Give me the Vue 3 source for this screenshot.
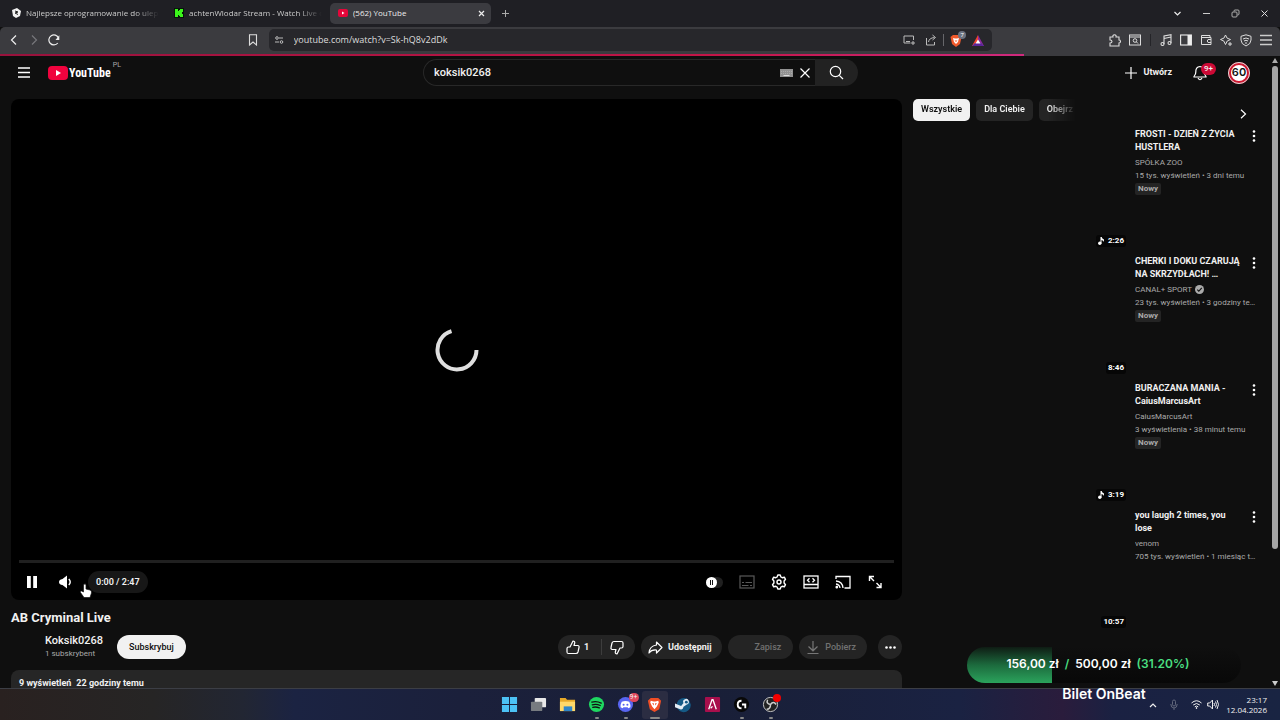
<script setup>
const tabs = [
  { id: 'soft', title: 'Najlepsze oprogramowanie do uleps', active: false },
  { id: 'kick', title: 'achtenWlodar Stream - Watch Live o', active: false },
  { id: 'yt', title: '(562) YouTube', active: true },
]

const videos = [
  { title: 'FROSTI - DZIEŃ Z ŻYCIA HUSTLERA', author: 'SPÓŁKA ZOO', meta: '15 tys. wyświetleń • 3 dni temu', isNew: true, time: '2:26', music: true },
  { title: 'CHERKI I DOKU CZARUJĄ NA SKRZYDŁACH! …', author: 'CANAL+ SPORT', verified: true, meta: '23 tys. wyświetleń • 3 godziny temu', isNew: true, time: '8:46' },
  { title: 'BURACZANA MANIA - CaiusMarcusArt', author: 'CaiusMarcusArt', meta: '3 wyświetlenia • 38 minut temu', isNew: true, time: '3:19', music: true },
  { title: 'you laugh 2 times, you lose', author: 'venom', meta: '705 tys. wyświetleń • 1 miesiąc temu', time: '10:57' },
]

const collected = 31.2
</script>

<template>
  <div class="desktop">
    <div class="tabbar">
      <div v-for="t in tabs" :key="t.id" class="tab" :class="{ active: t.active }">
        <svg v-if="t.id === 'soft'" class="fav" viewBox="0 0 10 10"><path d="M1 2l5-2 4 3-1 5-4 2-3-2z" fill="#f2f2f2" /><path d="M4 3l3 1-3 1 3 1.500" fill="none" stroke="#222" /></svg>
        <svg v-else-if="t.id === 'kick'" class="fav" viewBox="0 0 10 10"><rect width="10" height="10" fill="#07150a" /><path d="M1 1h3v2h1V2h1V1h3v3H8v2h1v3H6V8H5V7H4v2H1z" fill="#3bf51b" /></svg>
        <svg v-else class="fav" viewBox="0 0 10 10"><rect y="1" width="10" height="8" rx="2" fill="#e5063a" /><path d="M4 3.500v3L6.500 5z" fill="#fff" /></svg>
        <span class="tab-title">{{ t.title }}</span>
        <button v-if="t.active" class="ib tab-close" aria-label="Zamknij kartę"><svg width="7" height="7" viewBox="0 0 7 7"><path d="M1 1l5 5M6 1L1 6" stroke="#eee" stroke-width="1.200" /></svg></button>
      </div>
      <button class="ib new-tab" aria-label="Nowa karta"><svg width="9" height="9" viewBox="0 0 9 9"><path d="M4.500 1v7M1 4.500h7" stroke="#aaa" /></svg></button>
      <div class="window-buttons">
        <button class="ib" aria-label="Lista kart"><svg width="9" height="9" viewBox="0 0 9 9"><path d="M1.500 3l3 3 3-3" fill="none" stroke="#eee" stroke-width="1.200" /></svg></button>
        <button class="ib" aria-label="Minimalizuj"><svg width="9" height="9" viewBox="0 0 9 9"><path d="M1 4.500h7" stroke="#ccc" /></svg></button>
        <button class="ib" aria-label="Przywróć"><svg width="9" height="9" viewBox="0 0 9 9" fill="none" stroke="#bbb" stroke-width=".9"><rect x="1" y="3" width="5" height="5" rx="1" /><path d="M3 2.500V2q0-1 1-1h3q1 0 1 1v3q0 1-1.500 1" /></svg></button>
        <button class="ib" aria-label="Zamknij"><svg width="9" height="9" viewBox="0 0 9 9"><path d="M1.500 1.500l6 6M7.500 1.500l-6 6" stroke="#ddd" /></svg></button>
      </div>
    </div>

    <div class="toolbar">
      <div class="nav">
        <button class="ib" aria-label="Wstecz"><svg width="12" height="12" viewBox="0 0 12 12"><path d="M8 1.500L3.500 6 8 10.500" fill="none" stroke="#eee" stroke-width="1.200" /></svg></button>
        <button class="ib" aria-label="Dalej"><svg width="12" height="12" viewBox="0 0 12 12"><path d="M4 1.500L8.500 6 4 10.500" fill="none" stroke="#77777b" stroke-width="1.200" /></svg></button>
        <button class="ib" aria-label="Odśwież"><svg width="12" height="12" viewBox="0 0 12 12"><path d="M9.800 9A5 5 0 1 1 10.500 4" fill="none" stroke="#eee" stroke-width="1.200" /><path d="M11.300 1.200V6H7.500z" fill="#eee" /></svg></button>
        <button class="ib bookmark" aria-label="Zakładka"><svg width="10" height="12" viewBox="0 0 10 12"><path d="M1.500.7h7v10.300L5 8l-3.500 3z" fill="none" stroke="#ddd" stroke-width="1.100" /></svg></button>
      </div>
      <div class="urlbar">
        <svg width="9" height="8" viewBox="0 0 9 8" fill="none" stroke="#ccc" stroke-width=".9"><circle cx="2" cy="2" r="1.300" /><path d="M4 2h4M0 6h4" /><circle cx="6.500" cy="6" r="1.300" /></svg>
        <input class="url" aria-label="Adres" value="youtube.com/watch?v=Sk-hQ8v2dDk">
        <button class="ib" aria-label="Obraz w obrazie"><svg width="12" height="10" viewBox="0 0 12 10" fill="none" stroke="#bbb"><path d="M10.500 5V1H1v7h6.500M3 6.500h4M10 6v4M8 8h4" /></svg></button>
        <button class="ib" aria-label="Udostępnij stronę"><svg width="12" height="12" viewBox="0 0 12 12" fill="none" stroke="#bbb"><path d="M1.500 4v7h8V8M3.500 8q.5-4 6-4.500M7.500 1l3 2.500-3 2.500" /></svg></button>
        <span class="divider"></span>
        <button class="ib shield" aria-label="Brave Shields">
          <svg width="12" height="13" viewBox="0 0 12 13"><path d="M3 1h6l2.500 2L10 10l-4 3-4-3L.5 3z" fill="#f0592b" /><path d="M3 4l2 .5h2L9 4 8 8 6 10 4 8z" fill="#fff" /><path d="M4.500 6.500h3L6 8z" fill="#f0592b" /></svg>
          <span class="shield-count">7</span>
        </button>
        <button class="ib" aria-label="Brave Rewards"><svg width="12" height="11" viewBox="0 0 12 11"><path d="M6 0L0 11h6z" fill="#f1432f" /><path d="M6 0l6 11H6z" fill="#8b2a9c" /><path d="M0 11l3-3h6l3 3z" fill="#5a2598" /><path d="M6 4.500L3.500 8.500h5z" fill="#fff" /></svg></button>
      </div>
      <div class="extensions">
        <button class="ib" aria-label="Rozszerzenia"><svg width="13" height="13" viewBox="0 0 13 13"><path d="M2 3h3q-.5-2.200 1.500-2.200T8 3h3v3q1.500 0 1.500 1.500T11 9v3H2V9q2 0 2-1.500T2 6z" fill="none" stroke="#ddd" stroke-width="1.100" /></svg></button>
        <button class="ib" aria-label="Szukaj kart"><svg width="12" height="12" viewBox="0 0 12 12" fill="none" stroke="#ddd"><rect x=".5" y="1" width="11" height="10" /><path d="M.5 3h11M7.500 8l1.500 1.500" /><circle cx="6" cy="6.500" r="1.800" /></svg></button>
        <span class="divider dark"></span>
        <button class="ib" aria-label="Muzyka"><svg width="12" height="12" viewBox="0 0 12 12" fill="none" stroke="#ddd" stroke-width="1.100"><path d="M4 10V2l7-1.300V9M4 4.500L11 3" /><circle cx="2.500" cy="10" r="1.500" /><circle cx="9.500" cy="9" r="1.500" /></svg></button>
        <button class="ib" aria-label="Panel boczny"><svg width="12" height="12" viewBox="0 0 12 12"><rect x=".6" y="1" width="10.800" height="10" fill="none" stroke="#eee" stroke-width="1.100" /><path d="M7.500 1H11v10H7.500z" fill="#eee" /></svg></button>
        <button class="ib" aria-label="Portfel"><svg width="12" height="12" viewBox="0 0 12 12" fill="none" stroke="#ddd"><path d="M10 3.500V1.500H1.500v9h9.500V3.500H1.500M11 5.500H8q-1.500 1.500 0 3h3" /></svg></button>
        <button class="ib" aria-label="Leo AI"><svg width="12" height="12" viewBox="0 0 12 12" fill="none" stroke="#ddd"><path d="M5.500 1q.7 4 5 4.500-4 .5-5 5-.7-4.200-5-5 4.300-.5 5-4.500zM10 8v4M8 10h4" /></svg></button>
        <button class="ib" aria-label="VPN"><svg width="12" height="13" viewBox="0 0 12 13" fill="none" stroke="#ddd"><path d="M6 .8l5 1.500V6q0 4-5 6Q1 10 1 6V2.300zM3 5q3-2 6 0M4 7q2-1.500 4 0M6 8v2" /></svg></button>
        <button class="ib" aria-label="Menu przeglądarki"><svg width="12" height="12" viewBox="0 0 12 12"><path d="M0 1.500h12M0 6h12M0 10.500h12" stroke="#ccc" stroke-width="1.300" /></svg></button>
      </div>
    </div>
    <div class="loading"><div class="loading-fill"></div></div>

    <div class="viewport">
      <div class="page">
        <header class="masthead">
          <div class="brand">
            <button class="ib" aria-label="Menu"><svg width="12" height="11" viewBox="0 0 12 11"><path d="M0 1h12M0 5.500h12M0 10h12" stroke="#fff" stroke-width="1.300" /></svg></button>
            <a class="logo" href="#"><svg width="20" height="14" viewBox="0 0 20 14"><rect width="20" height="14" rx="4" fill="#f0033e" /><path d="M8 4v6l5-3z" fill="#fff" /></svg><span class="logo-text">YouTube</span><span class="country">PL</span></a>
          </div>
          <form class="search" @submit.prevent>
            <div class="search-box">
              <input aria-label="Szukaj" value="koksik0268">
              <svg width="13" height="8" viewBox="0 0 13 8"><rect width="13" height="8" fill="#929292" /><path d="M1 2.500h11M1 4.500h11" stroke="#aaa" stroke-dasharray="1 1" /><path d="M3.500 6.500h6" stroke="#ddd" /></svg>
              <button type="button" class="ib" aria-label="Wyczyść"><svg width="12" height="12" viewBox="0 0 12 12"><path d="M1.500 1.500l9 9M10.500 1.500l-9 9" stroke="#fff" stroke-width="1.200" /></svg></button>
            </div>
            <button class="search-go" aria-label="Wyszukaj"><svg width="15" height="15" viewBox="0 0 15 15" fill="none" stroke="#fff" stroke-width="1.200"><circle cx="6.500" cy="6.500" r="5.200" /><path d="M10.300 10.300l3.700 3.700" /></svg></button>
          </form>
          <div class="account">
            <button class="create"><svg width="12" height="12" viewBox="0 0 12 12"><path d="M6 0v12M0 6h12" stroke="#fff" stroke-width="1.200" /></svg>Utwórz</button>
            <button class="ib bell" aria-label="Powiadomienia"><svg width="14" height="16" viewBox="0 0 14 16"><path d="M7 1.500Q2.500 2 2.800 7 3 9 1 11.500V12h12v-.5Q11 9 11.200 7 11.500 2 7 1.500z" fill="none" stroke="#fff" stroke-width="1.200" /><path d="M5 13q2 3.500 4 0" fill="none" stroke="#fff" stroke-width="1.200" /></svg><span class="count">9+</span></button>
            <button class="avatar" aria-label="Konto">60</button>
          </div>
        </header>

        <div class="columns">
          <main class="primary">
            <section class="player">
              <div class="stage">
                <svg class="spinner" viewBox="0 0 44 44"><path d="M16.500 3.200A19.500 19.500 0 1 0 41.500 22" fill="none" stroke="#dfdfdf" stroke-width="4" /></svg>
              </div>
              <input class="seek" type="range" aria-label="Postęp" value="0">
              <div class="controls">
                <button class="ib" aria-label="Pauza"><svg width="10" height="12" viewBox="0 0 10 12"><path d="M0 0h3.800v12H0zM6.200 0H10v12H6.200z" fill="#fff" /></svg></button>
                <button class="ib c-vol" aria-label="Głośność"><svg width="13" height="14" viewBox="0 0 13 14"><path d="M8 .5v13L3.500 10Q0 9.500 0 7t3.500-3z" fill="#fff" /><path d="M9.800 4q2.800 3 0 6" fill="none" stroke="#fff" stroke-width="1.400" /></svg></button>
                <span class="clock">0:00 / 2:47</span>
                <svg class="pointer" viewBox="0 0 12 15"><path d="M4 1.200Q5.500.2 6 2v4l4 1q2 .7 1.500 3L10 14.500H4L.5 9.500q-.7-2 1-1.500L3.500 9V2z" fill="#fff" stroke="#111" stroke-width=".7" /></svg>
                <div class="right-controls">
                  <label class="autoplay"><input type="checkbox" aria-label="Autoodtwarzanie"><span class="knob"><i></i><i></i></span></label>
                  <button class="ib" aria-label="Napisy"><svg width="16" height="14" viewBox="0 0 16 14"><rect x="1" y="1" width="14" height="12" fill="none" stroke="#595959" stroke-width="1.200" /><path d="M3 7.500h2M6.500 7.500H13M3 10.500h6.500M11 10.500h2" stroke="#595959" /></svg></button>
                  <button class="ib" aria-label="Ustawienia"><svg width="16" height="16" viewBox="0 0 16 16" fill="none" stroke="#fff" stroke-width="1.400"><path d="M6.800 1h2.400l.7 2 1.300.7 2.100-.5 1.200 2.100L13.100 7v2l1.400 1.700-1.200 2.100-2.100-.5-1.300.7-.7 2H6.800l-.7-2-1.300-.7-2.100.5-1.200-2.100L2.900 9V7L1.500 5.300l1.200-2.100 2.100.5L6.100 3z" stroke-linejoin="round" /><circle cx="8" cy="8" r="2" /></svg></button>
                  <button class="ib" aria-label="Tryb kinowy"><svg width="16" height="14" viewBox="0 0 16 14" fill="none" stroke="#fff" stroke-width="1.300"><rect x="1" y="1" width="14" height="12" /><path d="M1 9.500h14M6.500 3.200L4.500 5.200l2 2M9.500 3.200l2 2-2 2" /></svg></button>
                  <button class="ib" aria-label="Przesyłaj"><svg width="16" height="14" viewBox="0 0 16 14" fill="none" stroke="#fff" stroke-width="1.300"><path d="M1 4V1.500h14V13H9.500M1 6q6.500.5 7 7M1 9q3.500.5 4 4" /><circle cx="1.800" cy="12.200" r=".7" fill="#fff" /></svg></button>
                  <button class="ib" aria-label="Pełny ekran"><svg width="16" height="14" viewBox="0 0 16 14" fill="none" stroke="#fff" stroke-width="1.400"><path d="M7 6L2.500 1.500M2.500 6V1.500H7M9.500 8l4.500 4.500M14 8v4.500H9.500" /></svg></button>
                </div>
              </div>
            </section>

            <h1>AB Cryminal Live</h1>
            <div class="meta-row">
              <div class="owner"><a class="channel" href="#">Koksik0268</a><span class="subs">1 subskrybent</span></div>
              <button class="subscribe">Subskrybuj</button>
              <div class="actions">
                <div class="votes">
                  <button class="vote"><svg width="14" height="15" viewBox="0 0 14 15" fill="none" stroke="#fff" stroke-width="1.200" stroke-linejoin="round"><path d="M4 7L7 1q2 .2 1.700 2L8 5.500h4q1.500.5 1 2L12 12q-.5 1.500-2 1.500H2.500Q1 13.500 1 12V8.500Q1 7 2.500 7z" /></svg>1</button>
                  <button class="vote down" aria-label="Nie podoba mi się"><svg width="14" height="15" viewBox="0 0 14 15" fill="none" stroke="#fff" stroke-width="1.200" stroke-linejoin="round"><path d="M10 8L7 14q-2-.2-1.700-2L6 9.500H2q-1.500-.5-1-2L2 3q.5-1.500 2-1.500h7.500Q13 1.500 13 3v3.500Q13 8 11.500 8z" /></svg></button>
                </div>
                <button class="pill"><svg width="15" height="13" viewBox="0 0 15 13"><path d="M8.500 1l5.500 5.500L8.500 12V9Q3.500 8.500 1 12q.5-7 7.500-8z" fill="none" stroke="#fff" stroke-width="1.200" stroke-linejoin="round" /></svg>Udostępnij</button>
                <button class="pill save" disabled>Zapisz</button>
                <button class="pill download" disabled><svg width="12" height="13" viewBox="0 0 12 13"><path d="M6 0v9.500M1.500 5.500L6 9.800l4.500-4.300M.5 12.500h11" fill="none" stroke="#777" stroke-width="1.200" /></svg>Pobierz</button>
                <button class="more" aria-label="Więcej"><svg width="11" height="3" viewBox="0 0 11 3" fill="#fff"><circle cx="1.500" cy="1.500" r="1.300" /><circle cx="5.500" cy="1.500" r="1.300" /><circle cx="9.500" cy="1.500" r="1.300" /></svg></button>
              </div>
            </div>
            <section class="description"><span>9 wyświetleń</span><span>22 godziny temu</span></section>
          </main>

          <aside class="secondary">
            <div class="chips">
              <div class="chip-list">
                <button class="chip on">Wszystkie</button><button class="chip">Dla Ciebie</button><button class="chip">Obejrz</button>
              </div>
              <button class="ib chips-next" aria-label="Dalej"><svg width="7" height="10" viewBox="0 0 7 10"><path d="M1 .8L5.500 5 1 9.200" fill="none" stroke="#fff" stroke-width="1.200" /></svg></button>
            </div>
            <article v-for="v in videos" :key="v.title" class="video">
              <div class="thumb"><span class="time"><svg v-if="v.music" width="6" height="8" viewBox="0 0 6 8"><circle cx="1.800" cy="6.200" r="1.700" fill="#fff" /><path d="M2.500 0h1.200Q4 1.700 6 2.500V5Q5.500 3.300 3.500 3v3.200h-1z" fill="#fff" /></svg>{{ v.time }}</span></div>
              <div class="info">
                <h3>{{ v.title }}</h3>
                <p>{{ v.author }}<svg v-if="v.verified" class="verified" viewBox="0 0 9 9"><circle cx="4.500" cy="4.500" r="4.500" fill="#aaa" /><path d="M2.300 4.700l1.500 1.500 3-3.400" fill="none" stroke="#111" stroke-width="1.100" /></svg></p>
                <p>{{ v.meta }}</p>
                <span v-if="v.isNew" class="new">Nowy</span>
              </div>
              <button class="ib kebab" aria-label="Menu filmu"><svg width="4" height="12" viewBox="0 0 4 12" fill="#fff"><circle cx="2" cy="1.500" r="1.300" /><circle cx="2" cy="6" r="1.300" /><circle cx="2" cy="10.500" r="1.300" /></svg></button>
            </article>
          </aside>
        </div>
      </div>
      <div class="scrollbar">
        <svg width="6" height="5" viewBox="0 0 6 5"><path d="M3 0l3 5H0z" fill="#aaa" /></svg>
        <div class="track"><div class="thumb-bar"></div></div>
        <svg width="6" height="5" viewBox="0 0 6 5"><path d="M0 0h6L3 5z" fill="#ccc" /></svg>
      </div>
    </div>

    <footer class="taskbar">
      <div class="apps">
        <button class="app" aria-label="Start"><svg viewBox="0 0 18 18"><path d="M1 1h7.500v7.500H1zM9.500 1H17v7.500H9.500zM1 9.500h7.500V17H1zM9.500 9.500H17V17H9.500z" fill="#4cc2f5" /></svg></button>
        <button class="app" aria-label="Widok zadań"><svg viewBox="0 0 18 18"><rect x="5" y="2" width="12" height="10" rx="1" fill="#e8e8e8" /><rect x="1" y="6" width="12" height="10" rx="1" fill="#777b80" /></svg></button>
        <button class="app" aria-label="Eksplorator plików"><svg viewBox="0 0 18 18"><path d="M1 2h6l1.500 2H17v12H1z" fill="#e8a928" /><path d="M1 6h16v10H1z" fill="#ffd869" /><path d="M5 11h9v5H5z" fill="#2f86c9" /></svg></button>
        <button class="app running" aria-label="Spotify"><svg viewBox="0 0 18 18"><circle cx="9" cy="9" r="8" fill="#1ed760" /><path d="M4 6.500q5-1.500 10 1M4.500 9.300q4.500-1.300 8.500.8M5 12q3.500-1 7 .6" fill="none" stroke="#111" stroke-width="1.400" stroke-linecap="round" /></svg></button>
        <button class="app running" aria-label="Discord"><svg viewBox="0 0 18 18"><circle cx="9" cy="9" r="8" fill="#5865f2" /><path d="M5 6q4-1.500 8 0 1.500 3 1.200 6L12 13l-.8-1.200H6.800L6 13l-2.200-1Q3.500 9 5 6z" fill="#fff" /><circle cx="7" cy="9.300" r="1.100" fill="#5865f2" /><circle cx="11" cy="9.300" r="1.100" fill="#5865f2" /></svg><span class="app-count">9+</span></button>
        <button class="app running current" aria-label="Brave"><svg viewBox="0 0 18 18"><path d="M5 2h8l3 3-2 9-5 3-5-3L2 5z" fill="#f04e25" /><path d="M5 5l3 .7h2l3-.7.500 2-2 4L9 14l-2.500-3-2-4z" fill="#fff" /><path d="M6.500 7.500l2 .5-.5 2zM11.500 7.500l-2 .5.5 2z" fill="#f04e25" /></svg></button>
        <button class="app" aria-label="Steam"><svg viewBox="0 0 18 18"><path d="M2 7.500A7.500 7.500 0 1 1 2.500 13z" fill="#155a86" /><path d="M0 8l6.500 2.500L9 7.500A3 3 0 1 1 12.500 9L9 11.500Q8.500 15 5.500 14L0 11.800z" fill="#e4edf5" /><circle cx="12" cy="6.500" r="1.500" fill="#155a86" /></svg></button>
        <button class="app" aria-label="Aplikacja"><svg viewBox="0 0 18 18"><rect x="1" y="1" width="16" height="16" rx="1" fill="#a80f4c" /><path d="M5 14L8.500 4h1L13 14M7 13l2-2" fill="none" stroke="#fff" stroke-width="1.400" /></svg></button>
        <button class="app running" aria-label="Logitech G HUB"><svg viewBox="0 0 18 18"><circle cx="9" cy="9" r="8" fill="#080808" /><path d="M9 5Q5 5 5 9t4 4M9.500 9H13v4" fill="none" stroke="#fff" stroke-width="2" /></svg></button>
        <button class="app running" aria-label="OBS Studio"><svg viewBox="0 0 18 18"><circle cx="9" cy="9" r="7.500" fill="#222" stroke="#ccc" /><path d="M9 9Q4 8 6 4M9 9q3-4 6 0M9 9q0 5-4 5" fill="none" stroke="#ccc" stroke-width="1.600" /></svg><span class="rec"></span></button>
      </div>
      <div class="tray">
        <button class="ib" aria-label="Ukryte ikony"><svg width="8" height="6" viewBox="0 0 8 6"><path d="M1 5l3-3 3 3" fill="none" stroke="#eee" stroke-width="1.200" /></svg></button>
        <svg width="8" height="12" viewBox="0 0 8 12" fill="none" stroke="#62687c"><rect x="2.500" y="1" width="3" height="6" rx="1.500" /><path d="M.8 5q0 4 3.200 4t3.200-4M4 9v2" /></svg>
        <div class="net">
          <svg width="11" height="9" viewBox="0 0 11 9" fill="none" stroke="#eee"><path d="M.5 3q5-4.500 10 0M2.200 5q3.300-3 6.600 0M3.800 6.800q1.700-1.500 3.400 0" /><circle cx="5.500" cy="8" r=".5" fill="#eee" /></svg>
          <svg width="12" height="11" viewBox="0 0 12 11" fill="none" stroke="#eee"><path d="M.7 4h2L5.500 1v9L2.700 7h-2zM7 4q1 1.500 0 3M8.500 2.500q2 3 0 6M10 1q3 4.500 0 9" /></svg>
        </div>
        <div class="date"><span>23:17</span><span>12.04.2026</span></div>
      </div>
    </footer>

    <div class="goal">
      <div class="goal-bar">
        <div class="goal-fill" :style="{ width: collected + '%' }"></div>
        <div class="goal-text"><span>156,00 zł</span><em>/</em><span>500,00 zł</span><em>(31.20%)</em></div>
      </div>
      <div class="goal-name">Bilet OnBeat</div>
    </div>
  </div>
</template>

<style>
html, body { background: #0f0f0f; overflow: hidden; }
</style>

<style scoped>
* { box-sizing: border-box; }
.desktop { position: relative; display: flex; flex-direction: column; height: 100vh; overflow: hidden; color: #f1f1f1; font: 9px/13px Roboto, sans-serif; }
button, input { font: inherit; color: inherit; border: 0; padding: 0; margin: 0; background: none; outline: 0; }
button { white-space: nowrap; }
svg { flex: none; display: block; }
a { color: inherit; text-decoration: none; }
.ib { display: flex; align-items: center; justify-content: center; flex: none; }

.tabbar { display: flex; flex: none; align-items: center; height: 27px; padding: 0 11px 1px 4px; gap: 2px; background: #1f1f24; font: 8px/12px "Open Sans", sans-serif; color: #ccc; }
.tab { display: flex; align-items: center; gap: 5px; width: 161px; height: 21px; padding: 0 2px 0 7px; border-radius: 5px; }
.tab.active { padding: 0 6px 0 8px; background: #3b3b40; color: #eee; }
.fav { width: 10px; height: 10px; }
.tab-title { flex: 1; overflow: hidden; white-space: nowrap; }
.tab:not(.active) .tab-title { mask-image: linear-gradient(90deg, #000 80%, transparent 97%); }
.new-tab { width: 24px; }
.window-buttons { display: flex; gap: 20px; margin-left: auto; }
.window-buttons button { width: 9px; }

.toolbar { display: flex; flex: none; align-items: center; height: 27px; padding: 0 8px 1px; background: #3b3b3f; border-radius: 5px 5px 0 0; }
.nav { display: flex; flex: 25 1 0; gap: 8px; padding-right: 11px; }
.bookmark { margin-left: auto; width: 10px; }
.urlbar { display: flex; flex: 71 1 0; align-items: center; gap: 10px; height: 22px; padding: 0 8px 0 6px; border-radius: 5px; background: #27272b; }
.url { flex: 1; min-width: 0; font: 9px/14px "Open Sans", sans-serif; color: #ddd; }
.divider { width: 1px; height: 12px; background: #66666a; }
.divider.dark { background: #242428; }
.urlbar .divider { margin: 0 -4px; }
.shield { position: relative; }
.shield-count { position: absolute; right: -4px; top: -3px; width: 8px; height: 8px; border-radius: 4px; background: #6b7280; font: 6px/8px Roboto, sans-serif; color: #fff; }
.extensions { display: flex; flex: 28 1 0; align-items: center; justify-content: flex-end; gap: 8px; }
.extensions .divider { margin: 0 1px; }
.loading { flex: none; height: 2px; background: #3b3b3f; }
.loading-fill { width: 80%; height: 2px; background: linear-gradient(90deg, #98123c, #c41548 70%, #d02a7e); }

.viewport { display: flex; flex: 1; min-height: 0; background: #0f0f0f; }
.page { flex: 1; min-width: 0; overflow: hidden; }
.scrollbar { display: flex; flex: none; flex-direction: column; align-items: center; gap: 3px; width: 8px; padding: 2px 2px 2px 0; }
.track { flex: 1; width: 6px; }
.thumb-bar { height: 79%; border-radius: 3px; background: #a5a5a5; }

.masthead { display: flex; align-items: center; justify-content: space-between; height: 33px; padding: 0 22px 0 18px; }
.brand, .account { display: flex; align-items: center; flex: 1; }
.brand { gap: 18px; }
.logo { display: flex; align-items: center; }
.logo-text { margin-left: 1px; font: 700 12px/16px "Liberation Sans Narrow", "Roboto Condensed", "Open Sans Condensed", Roboto, sans-serif; color: #fff; }
.country { align-self: flex-start; margin: -4px 0 0 2px; font-size: 7px; line-height: 8px; color: #aaa; }
.search { display: flex; width: 435px; height: 27px; margin-left: 13px; }
.search-box { display: flex; flex: 1; align-items: center; gap: 6px; padding: 0 4px 0 10px; border: 1px solid #282828; border-right: 0; border-radius: 14px 0 0 14px; }
.search-box input { flex: 1; min-width: 0; font-size: 11px; font-weight: 500; }
.search-go { display: flex; align-items: center; justify-content: center; width: 43px; border-radius: 0 14px 14px 0; background: #222; }
.account { justify-content: flex-end; gap: 21px; }
.create { display: flex; align-items: center; gap: 6px; font-weight: 700; }
.bell { position: relative; }
.count { position: absolute; left: 8px; top: -2px; height: 12px; padding: 0 3px; border-radius: 6px; background: #cc0935; font-size: 8px; line-height: 12px; font-weight: 500; }
.avatar { width: 22px; height: 22px; border: 3px solid #cf1730; outline: 1px solid #ddd; outline-offset: -1px; border-radius: 50%; background: #fff; color: #111; font: 600 11px/15px Inter, sans-serif; }

.columns { display: flex; gap: 11px; padding: 10px 11px 0; }
.primary { flex: 1; min-width: 0; }
.player { display: flex; flex-direction: column; aspect-ratio: 16/9; border-radius: 8px; background: #000; }
.stage { display: flex; flex: 1; align-items: center; justify-content: center; padding-top: 40px; }
.spinner { width: 44px; height: 44px; }
.seek { appearance: none; display: block; height: 3px; margin: 0 8px; background: #202020; }
.seek::-webkit-slider-thumb { appearance: none; width: 0; height: 0; }
.controls { position: relative; display: flex; flex: none; align-items: center; height: 37px; padding: 1px 19px 0 16px; }
.c-vol { margin-left: 22px; }
.clock { margin-left: 16px; height: 22px; padding: 0 8px; border-radius: 11px; background: #171717; line-height: 22px; font-weight: 600; }
.pointer { position: absolute; left: 69px; top: 20px; width: 12px; height: 15px; }
.right-controls { display: flex; align-items: center; gap: 16px; margin-left: auto; }
.autoplay { position: relative; width: 17px; height: 11px; border-radius: 6px; background: #202020; }
.autoplay input { position: absolute; inset: 0; opacity: 0; }
.knob { display: flex; align-items: center; justify-content: center; gap: 1px; width: 11px; height: 11px; border-radius: 50%; background: #fff; }
.knob i { width: 1px; height: 5px; background: #111; }

h1 { margin: 9px 0 0; font-size: 13px; line-height: 18px; font-weight: 700; }
.meta-row { display: flex; align-items: center; margin-top: 8px; height: 24px; font-weight: 700; }
.owner { display: flex; flex-direction: column; margin-left: 34px; }
.channel { font-size: 11px; font-weight: 500; }
.subs { font-size: 8px; font-weight: 400; color: #aaa; }
.subscribe { margin-left: 14px; height: 24px; padding: 0 12px; border-radius: 12px; background: #f1f1f1; color: #0f0f0f; font-weight: 500; }
.actions { display: flex; gap: 6px; margin-left: auto; }
.votes, .pill, .more { display: flex; align-items: center; height: 24px; border-radius: 12px; background: #242424; }
.vote { display: flex; align-items: center; gap: 4px; height: 16px; padding: 0 12px 0 8px; }
.down { padding: 0 11px 0 8px; border-left: 1px solid #3d3d3d; }
.pill { gap: 5px; padding: 0 10px 0 7px; }
.save { padding: 0 12px 0 27px; color: #717171; font-weight: 500; }
.download { gap: 6px; padding: 0 11px 0 8px; color: #717171; font-weight: 500; }
.more { justify-content: center; width: 24px; margin-left: 5px; }
.description { display: flex; gap: 5px; height: 80px; margin-top: 11px; padding: 7px 8px; border-radius: 8px; background: #262626; font-weight: 700; }

.secondary { width: 348px; flex: none; }
.chips { display: flex; align-items: flex-start; justify-content: space-between; height: 29px; }
.chip-list { display: flex; flex: none; gap: 6px; width: 165px; overflow: hidden; mask-image: linear-gradient(90deg, #000 82%, transparent 99%); }
.chip { flex: none; height: 22px; padding: 0 8px 1px; border-radius: 5px; background: #242424; font-weight: 600; }
.chip.on { background: #f1f1f1; color: #0f0f0f; }
.chips-next { width: 7px; margin: 10px 14px 0 0; }
.video { display: flex; margin-bottom: 6px; }
.thumb { display: flex; align-items: flex-end; justify-content: flex-end; width: 215px; aspect-ratio: 215/121; padding: 2px; flex: none; margin-right: 7px; }
.time { display: flex; align-items: center; gap: 4px; height: 12px; padding: 0 2px; border-radius: 3px; background: #060606; font-size: 8px; line-height: 12px; font-weight: 700; color: #fff; }
.info { flex: 1; min-width: 0; padding-right: 4px; }
h3 { margin: 0 14px 2px 0; font-size: 9px; line-height: 13px; font-weight: 700; }
.info p { margin: 0; font-size: 8px; line-height: 13px; color: #aaa; overflow: hidden; white-space: nowrap; text-overflow: ellipsis; }
.verified { display: inline-block; width: 9px; height: 9px; margin-left: 3px; vertical-align: -2px; }
.new { display: block; width: fit-content; padding: 0 3px; margin-top: 1px; border-radius: 2px; background: #242424; font-size: 8px; line-height: 12px; font-weight: 700; color: #aaa; }
.kebab { align-self: flex-start; width: 4px; margin: 2px 5px 0 -8px; }

.taskbar { position: relative; display: flex; flex: none; align-items: center; justify-content: center; height: 32px; border-top: 1px solid #3c3e45; background: linear-gradient(90deg, #292120, #262525 12%, #222633 19%, #1b2342 23%, #1b203b 36%, #191f37 55%, #1a2242 75%, #2a1c3c 83%, #1a2142 87%, #192442); }
.apps { display: flex; gap: 3px; }
.app { position: relative; display: flex; align-items: center; justify-content: center; width: 26px; height: 28px; border-radius: 3px; }
.app svg { width: 17px; height: 17px; }
.app.current { background: #2b2d42; }
.app.running::after { content: ""; position: absolute; bottom: 0; width: 4px; height: 2px; border-radius: 1px; background: #888; }
.app.current::after { width: 10px; }
.app-count { position: absolute; right: 0; top: 2px; padding: 0 1px; border-radius: 5px; background: #e0475c; font-size: 7px; line-height: 9px; }
.rec { position: absolute; right: 3px; top: 3px; width: 8px; height: 8px; border-radius: 50%; background: #f40000; }
.tray { position: absolute; right: 13px; top: 0; display: flex; align-items: center; gap: 13px; height: 31px; }
.net { display: flex; align-items: center; gap: 5px; }
.date { display: flex; flex-direction: column; margin-left: -6px; text-align: right; font: 8px/10px "Open Sans", sans-serif; }

.goal { position: absolute; right: 39px; bottom: 17px; width: 274px; font: 600 12px/18px Inter, sans-serif; color: #fff; text-align: center; }
.goal-bar { position: relative; height: 36px; overflow: hidden; border-radius: 18px; background: linear-gradient(#0f0f0f, #080808); }
.goal-fill { height: 100%; background: linear-gradient(#0f1c14, #1c6a3d 50%, #2ba35c); }
.goal-text { position: absolute; inset: 0; display: flex; align-items: center; justify-content: center; gap: 6px; padding: 0 12px 2px 0; }
.goal em { font-style: normal; color: #4ade80; }
.goal-name { margin-top: 2px; font-size: 14px; }
</style>
